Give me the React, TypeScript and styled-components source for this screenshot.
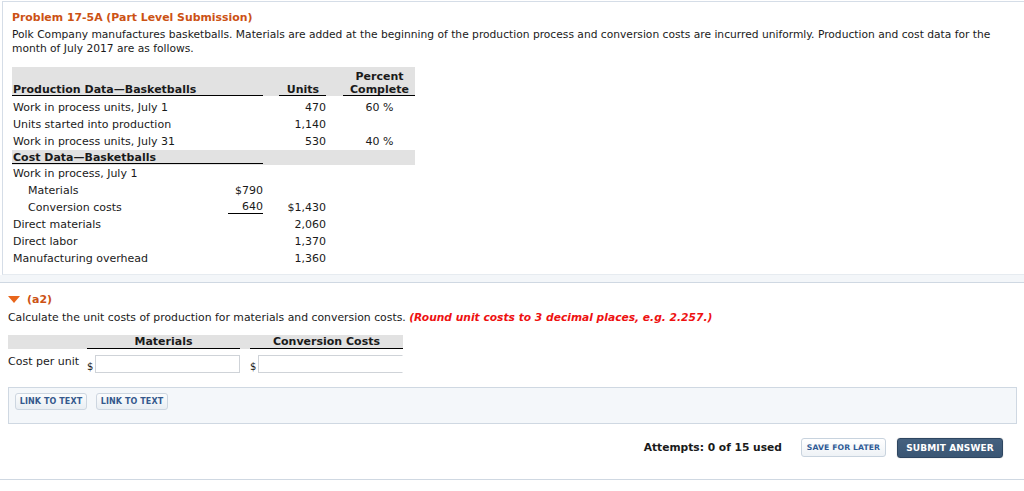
import React, { ReactElement } from 'react';
import styled, { createGlobalStyle } from 'styled-components';

const GlobalStyle = createGlobalStyle`
  html, body {
    margin: 0;
    padding: 0;
    background: #fff;
  }
  body {
    font-family: 'DejaVu Sans', Verdana, sans-serif;
    font-size: 11px;
    color: #1a1a1a;
    width: 1024px;
    overflow: hidden;
  }
`;

const Page = styled.div`
  width: 1024px;
  padding-top: 1px;
`;

const ProblemBox = styled.div`
  margin-left: 2px;
  border-top: 1px solid #d5dde7;
  border-left: 1px solid #d5dde7;
  border-bottom: 1px solid #e6ebf0;
  padding: 9px 0 7px 9px;
`;

const Title = styled.h2`
  margin: 0 0 3px;
  font-size: 10.9px;
  line-height: 14px;
  font-weight: bold;
  color: #cc5214;
`;

const Paragraph = styled.p`
  margin: 0;
  font-size: 10.7px;
  line-height: 14px;
  padding-right: 8px;
`;

const DataGrid = styled.div`
  margin-top: 11px;
  width: 403px;
  display: grid;
  grid-template-columns: 215px 36px 16px 47px 17px 72px;
`;

const HeadBand = styled.div<{ $tall?: boolean }>`
  grid-column: 1 / -1;
  display: grid;
  grid-template-columns: subgrid;
  align-items: end;
  background: #e2e2e2;
  height: ${p => (p.$tall ? '29px' : '15px')};
  margin-bottom: ${p => (p.$tall ? '3px' : '0')};
`;

/* text lines are 13px apart; the rule sits just under the last baseline */
const HeadCell = styled.div<{ $col: string; $align?: string; $lines?: number; $gap?: number }>`
  grid-column: ${p => p.$col};
  height: ${p => (p.$lines || 1) * 13 - 1}px;
  font-weight: bold;
  line-height: 13px;
  text-align: ${p => p.$align || 'left'};
  border-bottom: 1px solid #000;
  padding-left: 1px;
  margin-bottom: ${p => p.$gap || 0}px;
`;

const Cell = styled.div<{ $col: string; $align?: string; $indent?: boolean }>`
  grid-column: ${p => p.$col};
  line-height: 17px;
  height: 17px;
  white-space: nowrap;
  text-align: ${p => p.$align || 'left'};
  padding-left: ${p => (p.$indent ? '16px' : '1px')};
`;

const Ruled = styled.span`
  display: inline-block;
  width: 35px;
  line-height: 13px;
  border-bottom: 1px solid #000;
  vertical-align: top;
  margin-top: 1px;
`;

const Band = styled.div`
  height: 7px;
  background: #f3f6f9;
  border-bottom: 1px solid #cfd8e2;
`;

const Section = styled.div`
  padding: 9px 0 0 8px;
`;

const PartHeader = styled.div`
  display: flex;
  align-items: center;
  gap: 7px;
  height: 14px;
  font-size: 11px;
  font-weight: bold;
  color: #cc5214;
`;

const Caret = styled.span`
  width: 0;
  height: 0;
  border-left: 6px solid transparent;
  border-right: 6px solid transparent;
  border-top: 7px solid #e8661c;
`;

const Instruction = styled.p`
  margin: 5px 0 0;
  font-size: 10.85px;
  line-height: 14px;
`;

const Hint = styled.em`
  color: #ee1111;
  font-weight: bold;
  font-size: 10.7px;
`;

const AnswerGrid = styled.div`
  margin-top: 10px;
  display: grid;
  grid-template-columns: 79px 153px 10px 153px;
  width: 395px;
`;

const AnswerHead = styled.div`
  grid-column: 1 / -1;
  display: grid;
  grid-template-columns: subgrid;
  background: #e2e2e2;
  height: 14px;
`;

const AnswerTitle = styled.div<{ $col: number }>`
  grid-column: ${p => p.$col};
  font-weight: bold;
  text-align: center;
  line-height: 13px;
  border-bottom: 1px solid #000;
  align-self: end;
`;

const RowLabel = styled.div`
  grid-column: 1;
  padding-top: 6px;
  line-height: 14px;
`;

const InputCell = styled.div<{ $col: number }>`
  grid-column: ${p => p.$col};
  display: flex;
  align-items: flex-end;
  padding-top: 6px;
  gap: 1px;
`;

const Dollar = styled.span`
  line-height: 12px;
  width: 7px;
  font-size: 10px;
`;

const AmountInput = styled.input<{ $open?: boolean }>`
  flex: 1;
  height: 18px;
  box-sizing: border-box;
  border: 1px solid #cfd3d8;
  border-right-color: ${p => (p.$open ? 'transparent' : '#cfd3d8')};
  padding: 0 3px;
  font: inherit;
  min-width: 0;
`;

const LinkBar = styled.div`
  margin: 14px 7px 0 8px;
  height: 37px;
  background: #f4f7fa;
  border: 1px solid #cfd8e2;
  display: flex;
  align-items: flex-start;
  gap: 9px;
  padding: 5px 0 0 6px;
  box-sizing: border-box;
`;

const LinkButton = styled.button`
  height: 17px;
  width: 72px;
  padding: 0;
  border: 1px solid #cdd6e0;
  border-radius: 3px;
  background: linear-gradient(#fbfcfd, #e9eef3);
  font-family: 'DejaVu Sans', Verdana, sans-serif;
  font-size: 8px;
  font-weight: bold;
  color: #35598d;
  letter-spacing: 0.1px;
`;

const Footer = styled.div`
  display: flex;
  justify-content: flex-end;
  align-items: center;
  height: 56px;
  padding-right: 21px;
  padding-bottom: 8px;
  border-bottom: 1px solid #cfd8e2;
  box-sizing: border-box;
`;

const Attempts = styled.span`
  font-size: 10.7px;
  font-weight: bold;
  margin-right: 19px;
`;

const ActionButton = styled.button<{ $primary?: boolean }>`
  height: ${p => (p.$primary ? '20px' : '19px')};
  padding: 0;
  width: ${p => (p.$primary ? '106px' : '85px')};
  margin-left: ${p => (p.$primary ? '11px' : '0')};
  border-radius: 3px;
  font-family: 'DejaVu Sans', Verdana, sans-serif;
  font-weight: bold;
  font-size: ${p => (p.$primary ? '9px' : '7.7px')};
  letter-spacing: 0.1px;
  color: ${p => (p.$primary ? '#ffffff' : '#2f5a96')};
  background: ${p => (p.$primary ? 'linear-gradient(#45617f, #3a5674)' : 'linear-gradient(#ffffff, #eef2f6)')};
  border: 1px solid ${p => (p.$primary ? '#2e4661' : '#c8d3de')};
  box-shadow: ${p => (p.$primary ? '0 0 1px rgba(0,0,0,0.4)' : 'none')};
`;

const productionRows = [
  { label: 'Work in process units, July 1', units: '470', pct: '60 %' },
  { label: 'Units started into production', units: '1,140', pct: '' },
  { label: 'Work in process units, July 31', units: '530', pct: '40 %' },
];

const costRows = [
  { label: 'Work in process, July 1', amount: '', total: '', indent: false, rule: false },
  { label: 'Materials', amount: '$790', total: '', indent: true, rule: false },
  { label: 'Conversion costs', amount: '640', total: '$1,430', indent: true, rule: true },
  { label: 'Direct materials', amount: '', total: '2,060', indent: false, rule: false },
  { label: 'Direct labor', amount: '', total: '1,370', indent: false, rule: false },
  { label: 'Manufacturing overhead', amount: '', total: '1,360', indent: false, rule: false },
];

const App = (): ReactElement => (
  <Page>
    <GlobalStyle />
    <ProblemBox>
      <Title>Problem 17-5A (Part Level Submission)</Title>
      <Paragraph>
        Polk Company manufactures basketballs. Materials are added at the beginning of the
        production process and conversion costs are incurred uniformly. Production and cost data
        for the month of July 2017 are as follows.
      </Paragraph>

      <DataGrid>
        <HeadBand $tall>
          <HeadCell $col="1 / 3">Production Data—Basketballs</HeadCell>
          <HeadCell $col="4" $align="center">Units</HeadCell>
          <HeadCell $col="6" $align="center" $lines={2}>
            Percent
            <br />
            Complete
          </HeadCell>
        </HeadBand>

        {productionRows.map(r => (
          <React.Fragment key={r.label}>
            <Cell $col="1 / 3">{r.label}</Cell>
            <Cell $col="4" $align="right">{r.units}</Cell>
            <Cell $col="6" $align="center">{r.pct}</Cell>
          </React.Fragment>
        ))}

        <HeadBand>
          <HeadCell $col="1 / 3" $gap={1}>Cost Data—Basketballs</HeadCell>
        </HeadBand>

        {costRows.map(r => (
          <React.Fragment key={r.label}>
            <Cell $col="1" $indent={r.indent}>{r.label}</Cell>
            <Cell $col="2" $align="right">
              {r.rule ? <Ruled>{r.amount}</Ruled> : r.amount}
            </Cell>
            <Cell $col="4" $align="right">{r.total}</Cell>
          </React.Fragment>
        ))}
      </DataGrid>
    </ProblemBox>
    <Band />

    <Section>
      <PartHeader>
        <Caret />
        (a2)
      </PartHeader>
      <Instruction>
        Calculate the unit costs of production for materials and conversion costs.{' '}
        <Hint>(Round unit costs to 3 decimal places, e.g. 2.257.)</Hint>
      </Instruction>

      <AnswerGrid>
        <AnswerHead>
          <AnswerTitle $col={2}>Materials</AnswerTitle>
          <AnswerTitle $col={4}>Conversion Costs</AnswerTitle>
        </AnswerHead>
        <RowLabel>Cost per unit</RowLabel>
        <InputCell $col={2}>
          <Dollar>$</Dollar>
          <AmountInput type="text" />
        </InputCell>
        <InputCell $col={4}>
          <Dollar>$</Dollar>
          <AmountInput type="text" $open />
        </InputCell>
      </AnswerGrid>
    </Section>

    <LinkBar>
      <LinkButton type="button">LINK TO TEXT</LinkButton>
      <LinkButton type="button">LINK TO TEXT</LinkButton>
    </LinkBar>

    <Footer>
      <Attempts>Attempts: 0 of 15 used</Attempts>
      <ActionButton type="button">SAVE FOR LATER</ActionButton>
      <ActionButton type="button" $primary>SUBMIT ANSWER</ActionButton>
    </Footer>
  </Page>
);

export default App;
